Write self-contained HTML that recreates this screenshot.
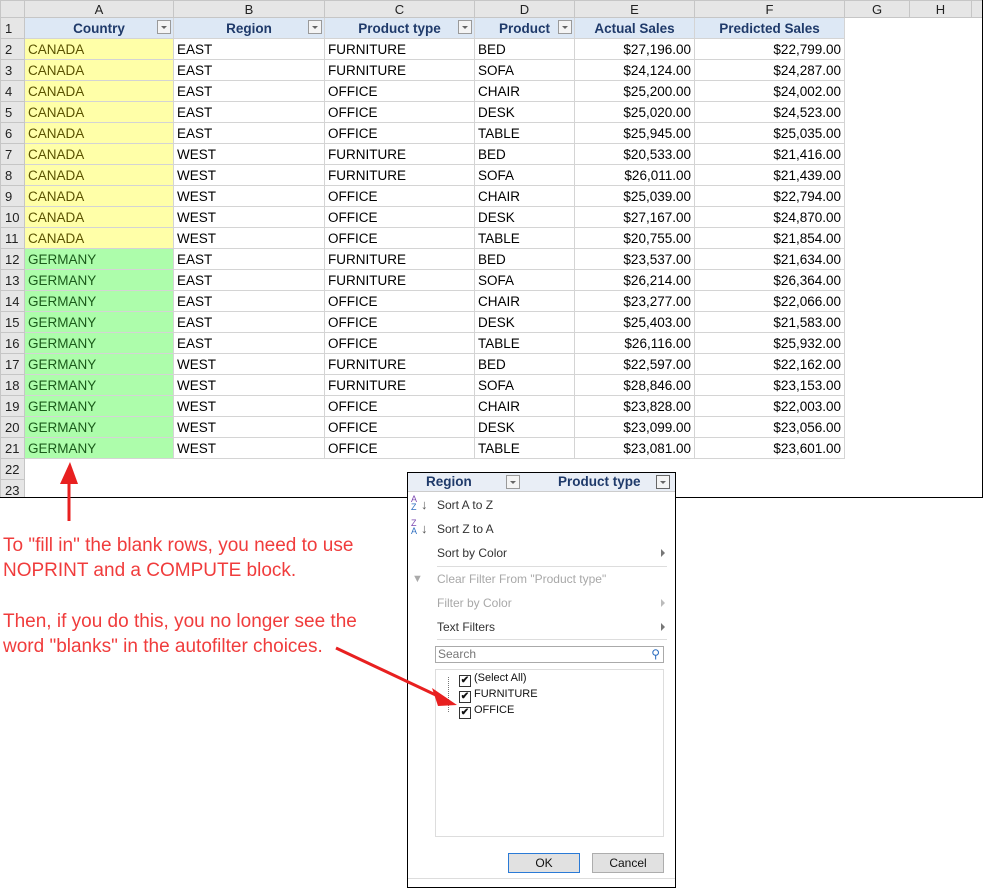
<!DOCTYPE html>
<html><head><meta charset="utf-8"><style>
body{margin:0;width:984px;height:888px;background:#fff;position:relative;overflow:hidden;font-family:"Liberation Sans",Arial,sans-serif}
#sheet{position:absolute;left:0;top:0;width:982px;height:497px;border:1px solid #000;border-top:none;border-left:none;overflow:hidden}
table{border-collapse:collapse;table-layout:fixed;font-size:13.5px;width:1091px}
td{padding:0 3px;height:20px;border:1px solid #d4d4d4;white-space:nowrap;overflow:hidden;color:#000}
tr.ch td{height:16px;background:#e6e6e6;text-align:center;color:#222;font-size:13px;border-color:#c6c6c6}
td.rh{background:#e6e6e6;color:#222;font-size:13px;padding:0 0 0 4px;border-color:#c6c6c6}
tr.h td.c{background:#dde8f5;color:#1f3a6a;font-weight:bold;text-align:center;position:relative}
.dd{position:absolute;right:2px;top:2px;width:14px;height:14px;border:1px solid #9a9a9a;background:#f4f4f4;box-sizing:border-box}
.dd:after{content:"";position:absolute;left:3px;top:5px;border-left:3px solid transparent;border-right:3px solid transparent;border-top:3px solid #666}
td.y{background:#ffffa8;color:#5a5200}
td.g{background:#adfdab;color:#1a5a1a}
td.n{text-align:right}
td.e{border:none}
.note{position:absolute;left:3px;color:#f03c3c;font-size:19px;line-height:25px}
#pop{position:absolute;left:407px;top:472px;width:267px;height:414px;border:1px solid #000;background:#fff;font-size:12px;color:#333}
.mi{position:absolute;left:29px}
.dis{color:#a8a8a8}
.arr{position:absolute;right:10px;width:0;height:0;border-top:4px solid transparent;border-bottom:4px solid transparent;border-left:4px solid #777}
.cb{display:inline-block;width:10px;height:10px;border:1px solid #333;vertical-align:-2px;margin-right:3px;position:relative;font-size:10px;line-height:10px;text-align:center;font-weight:bold}
</style></head><body>
<div id="sheet">
<table>
<colgroup><col style="width:24px"><col style="width:149px"><col style="width:151px"><col style="width:150px"><col style="width:100px"><col style="width:120px"><col style="width:150px"><col style="width:65px"><col style="width:62px"><col style="width:120px"></colgroup>
<tr class="ch"><td style="background:#e6e6e6"></td><td>A</td><td>B</td><td>C</td><td>D</td><td>E</td><td>F</td><td>G</td><td>H</td><td></td></tr>
<tr class="h"><td class="rh">1</td><td class="c">Country<span class="dd"></span></td><td class="c">Region<span class="dd"></span></td><td class="c">Product type<span class="dd"></span></td><td class="c">Product<span class="dd"></span></td><td class="c">Actual Sales</td><td class="c">Predicted Sales</td><td class="e"></td><td class="e"></td><td class="e"></td></tr>
<tr><td class="rh">2</td><td class="y">CANADA</td><td>EAST</td><td>FURNITURE</td><td>BED</td><td class="n">$27,196.00</td><td class="n">$22,799.00</td><td class="e"></td><td class="e"></td><td class="e"></td></tr>
<tr><td class="rh">3</td><td class="y">CANADA</td><td>EAST</td><td>FURNITURE</td><td>SOFA</td><td class="n">$24,124.00</td><td class="n">$24,287.00</td><td class="e"></td><td class="e"></td><td class="e"></td></tr>
<tr><td class="rh">4</td><td class="y">CANADA</td><td>EAST</td><td>OFFICE</td><td>CHAIR</td><td class="n">$25,200.00</td><td class="n">$24,002.00</td><td class="e"></td><td class="e"></td><td class="e"></td></tr>
<tr><td class="rh">5</td><td class="y">CANADA</td><td>EAST</td><td>OFFICE</td><td>DESK</td><td class="n">$25,020.00</td><td class="n">$24,523.00</td><td class="e"></td><td class="e"></td><td class="e"></td></tr>
<tr><td class="rh">6</td><td class="y">CANADA</td><td>EAST</td><td>OFFICE</td><td>TABLE</td><td class="n">$25,945.00</td><td class="n">$25,035.00</td><td class="e"></td><td class="e"></td><td class="e"></td></tr>
<tr><td class="rh">7</td><td class="y">CANADA</td><td>WEST</td><td>FURNITURE</td><td>BED</td><td class="n">$20,533.00</td><td class="n">$21,416.00</td><td class="e"></td><td class="e"></td><td class="e"></td></tr>
<tr><td class="rh">8</td><td class="y">CANADA</td><td>WEST</td><td>FURNITURE</td><td>SOFA</td><td class="n">$26,011.00</td><td class="n">$21,439.00</td><td class="e"></td><td class="e"></td><td class="e"></td></tr>
<tr><td class="rh">9</td><td class="y">CANADA</td><td>WEST</td><td>OFFICE</td><td>CHAIR</td><td class="n">$25,039.00</td><td class="n">$22,794.00</td><td class="e"></td><td class="e"></td><td class="e"></td></tr>
<tr><td class="rh">10</td><td class="y">CANADA</td><td>WEST</td><td>OFFICE</td><td>DESK</td><td class="n">$27,167.00</td><td class="n">$24,870.00</td><td class="e"></td><td class="e"></td><td class="e"></td></tr>
<tr><td class="rh">11</td><td class="y">CANADA</td><td>WEST</td><td>OFFICE</td><td>TABLE</td><td class="n">$20,755.00</td><td class="n">$21,854.00</td><td class="e"></td><td class="e"></td><td class="e"></td></tr>
<tr><td class="rh">12</td><td class="g">GERMANY</td><td>EAST</td><td>FURNITURE</td><td>BED</td><td class="n">$23,537.00</td><td class="n">$21,634.00</td><td class="e"></td><td class="e"></td><td class="e"></td></tr>
<tr><td class="rh">13</td><td class="g">GERMANY</td><td>EAST</td><td>FURNITURE</td><td>SOFA</td><td class="n">$26,214.00</td><td class="n">$26,364.00</td><td class="e"></td><td class="e"></td><td class="e"></td></tr>
<tr><td class="rh">14</td><td class="g">GERMANY</td><td>EAST</td><td>OFFICE</td><td>CHAIR</td><td class="n">$23,277.00</td><td class="n">$22,066.00</td><td class="e"></td><td class="e"></td><td class="e"></td></tr>
<tr><td class="rh">15</td><td class="g">GERMANY</td><td>EAST</td><td>OFFICE</td><td>DESK</td><td class="n">$25,403.00</td><td class="n">$21,583.00</td><td class="e"></td><td class="e"></td><td class="e"></td></tr>
<tr><td class="rh">16</td><td class="g">GERMANY</td><td>EAST</td><td>OFFICE</td><td>TABLE</td><td class="n">$26,116.00</td><td class="n">$25,932.00</td><td class="e"></td><td class="e"></td><td class="e"></td></tr>
<tr><td class="rh">17</td><td class="g">GERMANY</td><td>WEST</td><td>FURNITURE</td><td>BED</td><td class="n">$22,597.00</td><td class="n">$22,162.00</td><td class="e"></td><td class="e"></td><td class="e"></td></tr>
<tr><td class="rh">18</td><td class="g">GERMANY</td><td>WEST</td><td>FURNITURE</td><td>SOFA</td><td class="n">$28,846.00</td><td class="n">$23,153.00</td><td class="e"></td><td class="e"></td><td class="e"></td></tr>
<tr><td class="rh">19</td><td class="g">GERMANY</td><td>WEST</td><td>OFFICE</td><td>CHAIR</td><td class="n">$23,828.00</td><td class="n">$22,003.00</td><td class="e"></td><td class="e"></td><td class="e"></td></tr>
<tr><td class="rh">20</td><td class="g">GERMANY</td><td>WEST</td><td>OFFICE</td><td>DESK</td><td class="n">$23,099.00</td><td class="n">$23,056.00</td><td class="e"></td><td class="e"></td><td class="e"></td></tr>
<tr><td class="rh">21</td><td class="g">GERMANY</td><td>WEST</td><td>OFFICE</td><td>TABLE</td><td class="n">$23,081.00</td><td class="n">$23,601.00</td><td class="e"></td><td class="e"></td><td class="e"></td></tr>
<tr><td class="rh">22</td><td class="e" colspan="9"></td></tr>
<tr><td class="rh">23</td><td class="e" colspan="9"></td></tr>
</table>
</div>

<div class="note" style="top:533px">To "fill in" the blank rows, you need to use<br>NOPRINT and a COMPUTE block.</div>
<div class="note" style="top:609px">Then, if you do this, you no longer see the<br>word "blanks" in the autofilter choices.</div>

<div id="pop">
<div style="position:absolute;left:0;top:0;width:267px;height:18px;background:#e9eef6;border-bottom:1px solid #ccc;font-weight:bold;color:#1f3a6a;font-size:13.5px">
<span style="position:absolute;left:18px;top:1px">Region</span><span class="dd" style="left:98px;top:2px;right:auto"></span>
<span style="position:absolute;left:150px;top:1px">Product type</span><span class="dd" style="left:248px;top:2px;right:auto;border-color:#666"></span>
</div>
<div style="position:absolute;left:3px;top:22px;font-size:9px;line-height:8px;color:#7b48b0">A<br><span style="color:#2f6fc0">Z</span></div><div style="position:absolute;left:13px;top:24px;font-size:13px;color:#555">↓</div>
<div class="mi" style="top:25px">Sort A to Z</div>
<div style="position:absolute;left:3px;top:46px;font-size:9px;line-height:8px;color:#7b48b0">Z<br><span style="color:#2f6fc0">A</span></div><div style="position:absolute;left:13px;top:48px;font-size:13px;color:#555">↓</div>
<div class="mi" style="top:49px">Sort Z to A</div>
<div class="mi" style="top:73px">Sort by Color</div><div class="arr" style="top:76px"></div>
<div style="position:absolute;left:29px;right:8px;top:93px;border-top:1px solid #ddd"></div>
<div style="position:absolute;left:4px;top:100px;color:#aaa;font-size:11px">▼</div>
<div class="mi dis" style="top:99px">Clear Filter From "Product type"</div>
<div class="mi dis" style="top:123px">Filter by Color</div><div class="arr" style="top:126px;border-left-color:#bbb"></div>
<div class="mi" style="top:147px">Text Filters</div><div class="arr" style="top:150px"></div>
<div style="position:absolute;left:29px;right:8px;top:166px;border-top:1px solid #ddd"></div>
<div style="position:absolute;left:27px;top:173px;width:229px;height:17px;border:1px solid #aaa;color:#777;box-sizing:border-box;padding-left:2px;line-height:15px">Search<span style="position:absolute;right:3px;top:0;color:#2f6fc0">⚲</span></div>
<div style="position:absolute;left:27px;top:196px;width:229px;height:168px;border:1px solid #ddd;box-sizing:border-box">
<div style="position:absolute;left:12px;top:7px;height:35px;border-left:1px dotted #777"></div>
<div style="position:absolute;left:23px;top:2px;font-size:11px;color:#111"><span class="cb">✔</span>(Select All)</div>
<div style="position:absolute;left:23px;top:18px;font-size:11px;color:#111"><span class="cb">✔</span>FURNITURE</div>
<div style="position:absolute;left:23px;top:34px;font-size:11px;color:#111"><span class="cb">✔</span>OFFICE</div>
</div>
<div style="position:absolute;left:100px;top:380px;width:72px;height:20px;border:1px solid #2a7ad6;background:#e1e1e1;box-sizing:border-box;text-align:center;line-height:18px;color:#111">OK</div>
<div style="position:absolute;left:184px;top:380px;width:72px;height:20px;border:1px solid #adadad;background:#e1e1e1;box-sizing:border-box;text-align:center;line-height:18px;color:#111">Cancel</div>
<div style="position:absolute;left:0;right:0;top:405px;border-top:1px solid #ddd"></div>
</div>

<svg style="position:absolute;left:0;top:0" width="984" height="888">
<line x1="69" y1="521" x2="69" y2="482" stroke="#e82020" stroke-width="3"/>
<polygon points="60,484 78,484 70,462" fill="#e82020"/>
<line x1="336" y1="648" x2="440" y2="697" stroke="#e82020" stroke-width="3"/>
<polygon points="432,688 438,706 457,705" fill="#e82020"/>
</svg>
</body></html>
